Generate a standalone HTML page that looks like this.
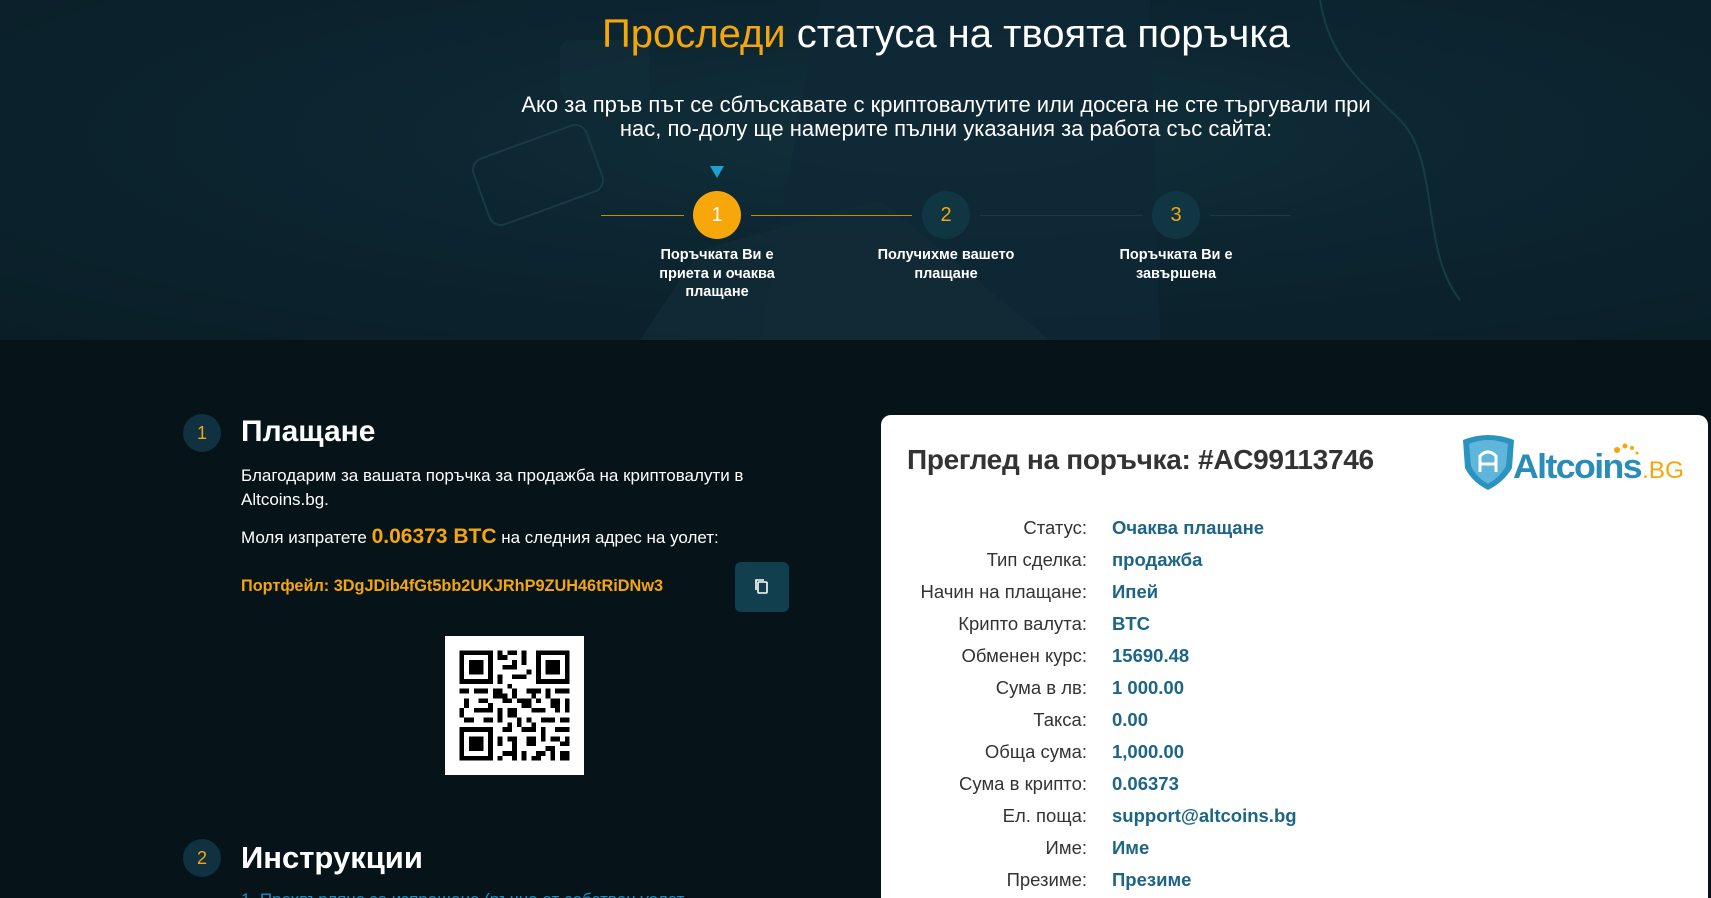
<!DOCTYPE html>
<html><head><meta charset="utf-8">
<style>
*{margin:0;padding:0;box-sizing:border-box}
html,body{width:1711px;height:898px;overflow:hidden}
body{background:#061419;font-family:"Liberation Sans",sans-serif;position:relative}
.hero{position:absolute;left:0;top:0;width:1711px;height:340px;background:radial-gradient(ellipse at 55% 40%,#11303b 0%,#0c2530 45%,#0a1e27 100%);overflow:hidden}
.abs{position:absolute}
.t{white-space:nowrap}
.title{left:0;width:1892px;text-align:center;top:12px;font-size:40px;color:#fff}
.sub{left:0;width:1892px;text-align:center;top:93px;font-size:22px;line-height:24px;color:#fff}
.circ{width:48px;height:48px;border-radius:50%;text-align:center;line-height:48px;font-size:20px;color:#f5a60b;background:#0f3642}
.lbl{width:160px;text-align:center;font-size:14.5px;line-height:18.5px;color:#fff;font-weight:bold}
.line{height:1px}
.row{position:absolute;left:881px;width:827px;font-size:18.5px}
.row .l{position:absolute;right:621px;color:#333;text-align:right;white-space:nowrap}
.row .v{position:absolute;left:231px;color:#1c6588;font-weight:bold;white-space:nowrap}
</style></head><body>
<div class="hero">
  <svg class="abs" style="left:0;top:0" width="1711" height="340">
    <polygon points="820,0 1150,0 1160,340 760,340" fill="#0f2836" opacity="0.8"/>
    <polygon points="700,250 880,200 1050,340 640,340" fill="#122c38" opacity="0.7"/>
    <rect x="478" y="140" width="120" height="70" rx="12" transform="rotate(-20 538 175)" fill="none" stroke="#173a45" stroke-width="2"/>
    <rect x="560" y="40" width="90" height="60" rx="10" fill="#132f3a" opacity="0.6"/>
    <path d="M1320 0 C1330 60 1360 80 1400 120 S1420 250 1460 300" stroke="#163c44" stroke-width="2" fill="none"/>
  </svg>
  <div class="abs t title"><span style="color:#f5a60b">Проследи</span> статуса на твоята поръчка</div>
  <div class="abs t sub">Ако за пръв път се сблъскавате с криптовалутите или досега не сте търгували при<br>нас, по-долу ще намерите пълни указания за работа със сайта:</div>
  <svg class="abs" style="left:710px;top:166px" width="14" height="12"><polygon points="0,0 14,0 7,12" fill="#1ba0d0"/></svg>
  <div class="abs line" style="left:601px;top:215px;width:83px;background:#c58a12"></div>
  <div class="abs line" style="left:751px;top:215px;width:161px;background:#c58a12"></div>
  <div class="abs line" style="left:980px;top:215px;width:163px;background:#1c3a44"></div>
  <div class="abs line" style="left:1210px;top:215px;width:81px;background:#1c3a44"></div>
  <div class="abs circ" style="left:693px;top:191px;background:#f7a70a;color:#fff">1</div>
  <div class="abs circ" style="left:922px;top:191px">2</div>
  <div class="abs circ" style="left:1152px;top:191px">3</div>
  <div class="abs lbl" style="left:637px;top:246px">Поръчката Ви е приета и очаква плащане</div>
  <div class="abs lbl" style="left:856px;top:246px;width:180px">Получихме вашето плащане</div>
  <div class="abs lbl" style="left:1096px;top:246px">Поръчката Ви е завършена</div>
</div>

<div class="abs" style="left:183px;top:414px;width:38px;height:38px;border-radius:50%;background:#0f3140;color:#f5a60b;text-align:center;line-height:38px;font-size:18px">1</div>
<div class="abs t" style="left:241px;top:415px;font-size:30px;font-weight:bold;color:#fff">Плащане</div>
<div class="abs" style="left:241px;top:464px;width:560px;font-size:17px;line-height:24px;color:#fff">Благодарим за вашата поръчка за продажба на криптовалути в Altcoins.bg.</div>
<div class="abs t" style="left:241px;top:525px;font-size:17px;color:#fff">Моля изпратете <b style="color:#f5a60b;font-size:21px">0.06373 BTC</b> на следния адрес на уолет:</div>
<div class="abs t" style="left:241px;top:577px;font-size:16.3px;font-weight:bold;color:#f5a60b">Портфейл: 3DgJDib4fGt5bb2UKJRhP9ZUH46tRiDNw3</div>
<div class="abs" style="left:735px;top:562px;width:54px;height:50px;border-radius:6px;background:#123f4e">
  <svg width="54" height="50"><rect x="23" y="20" width="9" height="11" rx="1" fill="none" stroke="#fff" stroke-width="1.6"/><path d="M21 28 V18 h8" fill="none" stroke="#fff" stroke-width="1.6"/></svg>
</div>
<div class="abs" style="left:445px;top:636px;width:139px;height:139px;background:#fff">
  <svg width="139" height="139" viewBox="0 0 29 29" shape-rendering="crispEdges">
    <g fill="#000">
      <path d="M3 3h7v7H3z M4 4v5h5V4z M5 5h3v3H5z" fill-rule="evenodd"/>
      <path d="M19 3h7v7h-7z M20 4v5h5V4z M21 5h3v3h-3z" fill-rule="evenodd"/>
      <path d="M3 19h7v7H3z M4 20v5h5v-5z M5 21h3v3H5z" fill-rule="evenodd"/>
      <path d="M11 3h1v2h-1zM13 3h2v1h-2zM16 3h1v3h-1zM12 6h2v1h-2zM11 8h1v2h-1zM14 8h3v1h-3zM13 10h1v1h-1zM3 11h2v1H3zM6 11h3v1H6zM10 11h2v2h-2zM14 11h1v2h-1zM17 11h3v1h-3zM21 11h1v2h-1zM23 11h3v1h-3zM4 13h1v2H4zM7 13h2v1H7zM12 13h2v1h-2zM16 13h2v2h-2zM19 13h1v1h-1zM22 13h2v2h-2zM25 13h1v3h-1zM3 15h1v2H3zM6 15h4v1H6zM11 15h1v3h-1zM13 15h2v2h-2zM18 15h3v1h-3zM8 17h2v1H8zM15 17h1v2h-1zM17 17h1v1h-1zM20 17h3v1h-3zM24 17h2v1h-2zM4 17h2v1H4zM12 19h2v1h-2zM16 19h3v1h-3zM20 19h1v3h-1zM23 19h3v1h-3zM11 21h1v2h-1zM13 21h2v1h-2zM17 21h2v2h-2zM22 21h2v1h-2zM25 21h1v2h-1zM12 24h3v1h-3zM16 24h1v2h-1zM19 24h2v1h-2zM22 23h1v3h-1zM24 24h2v2h-2zM11 25h1v1h-1zM14 25h1v1h-1zM18 25h2v1h-2z"/>
      <path d="M12 12h1v1h-1zM15 13h1v1h-1zM18 12h1v1h-1zM9 14h1v1H9zM23 15h1v1h-1zM13 18h1v1h-1zM18 18h1v1h-1zM21 23h1v1h-1zM14 22h1v2h-1zM24 22h1v1h-1zM12 4h1v1h-1zM14 5h1v2h-1zM17 7h1v1h-1z"/>
    </g>
  </svg>
</div>
<div class="abs" style="left:183px;top:839px;width:38px;height:38px;border-radius:50%;background:#0f3140;color:#f5a60b;text-align:center;line-height:38px;font-size:18px">2</div>
<div class="abs t" style="left:241px;top:840px;font-size:31px;font-weight:bold;color:#fff">Инструкции</div>
<div class="abs t" style="left:241px;top:890px;font-size:17px;color:#1a8fc0">1. Прехвърляне за изпращане (ръчно от собствен уолет</div>

<div class="abs" style="left:881px;top:415px;width:827px;height:483px;background:#fff;border-radius:10px 10px 0 0"></div>
<div class="abs t" style="left:907px;top:444px;font-size:28px;color:#333;font-weight:bold;letter-spacing:-0.3px">Преглед на поръчка: #AC99113746</div>
<svg class="abs" style="left:1458px;top:430px" width="240" height="62">
  <path d="M5 10 Q30 0 56 10 L54 38 Q46 52 30 60 Q14 52 7 38 Z" fill="#2a93c0"/>
  <path d="M11 14 Q30 6 50 14 L48 36 Q42 47 30 54 Q18 47 13 36 Z" fill="#5fb6da"/>
  <path d="M22 42 V26 Q30 18 38 26 V42 M22 34 H38" stroke="#fff" stroke-width="3" fill="none"/>
  <text x="55" y="48" font-family="Liberation Sans,sans-serif" font-weight="bold" font-size="34" fill="#2a8cb8" letter-spacing="-1.5" textLength="128" lengthAdjust="spacingAndGlyphs">Altcoins</text>
  <text x="184" y="48" font-family="Liberation Sans,sans-serif" font-size="24" fill="#f5a60b" textLength="42" lengthAdjust="spacingAndGlyphs">.BG</text>
  <circle cx="159" cy="20" r="3" fill="#f5a60b"/><circle cx="167" cy="16" r="2.5" fill="#f5a60b"/><circle cx="174" cy="18" r="2" fill="#f5a60b"/><circle cx="179" cy="23" r="1.5" fill="#f5a60b"/>
</svg>
<div class="row" style="top:517px"><span class="l">Статус:</span><span class="v">Очаква плащане</span></div>
<div class="row" style="top:549px"><span class="l">Тип сделка:</span><span class="v">продажба</span></div>
<div class="row" style="top:581px"><span class="l">Начин на плащане:</span><span class="v">Ипей</span></div>
<div class="row" style="top:613px"><span class="l">Крипто валута:</span><span class="v">BTC</span></div>
<div class="row" style="top:645px"><span class="l">Обменен курс:</span><span class="v">15690.48</span></div>
<div class="row" style="top:677px"><span class="l">Сума в лв:</span><span class="v">1 000.00</span></div>
<div class="row" style="top:709px"><span class="l">Такса:</span><span class="v">0.00</span></div>
<div class="row" style="top:741px"><span class="l">Обща сума:</span><span class="v">1,000.00</span></div>
<div class="row" style="top:773px"><span class="l">Сума в крипто:</span><span class="v">0.06373</span></div>
<div class="row" style="top:805px"><span class="l">Ел. поща:</span><span class="v">support@altcoins.bg</span></div>
<div class="row" style="top:837px"><span class="l">Име:</span><span class="v">Име</span></div>
<div class="row" style="top:869px"><span class="l">Презиме:</span><span class="v">Презиме</span></div>
</body></html>
